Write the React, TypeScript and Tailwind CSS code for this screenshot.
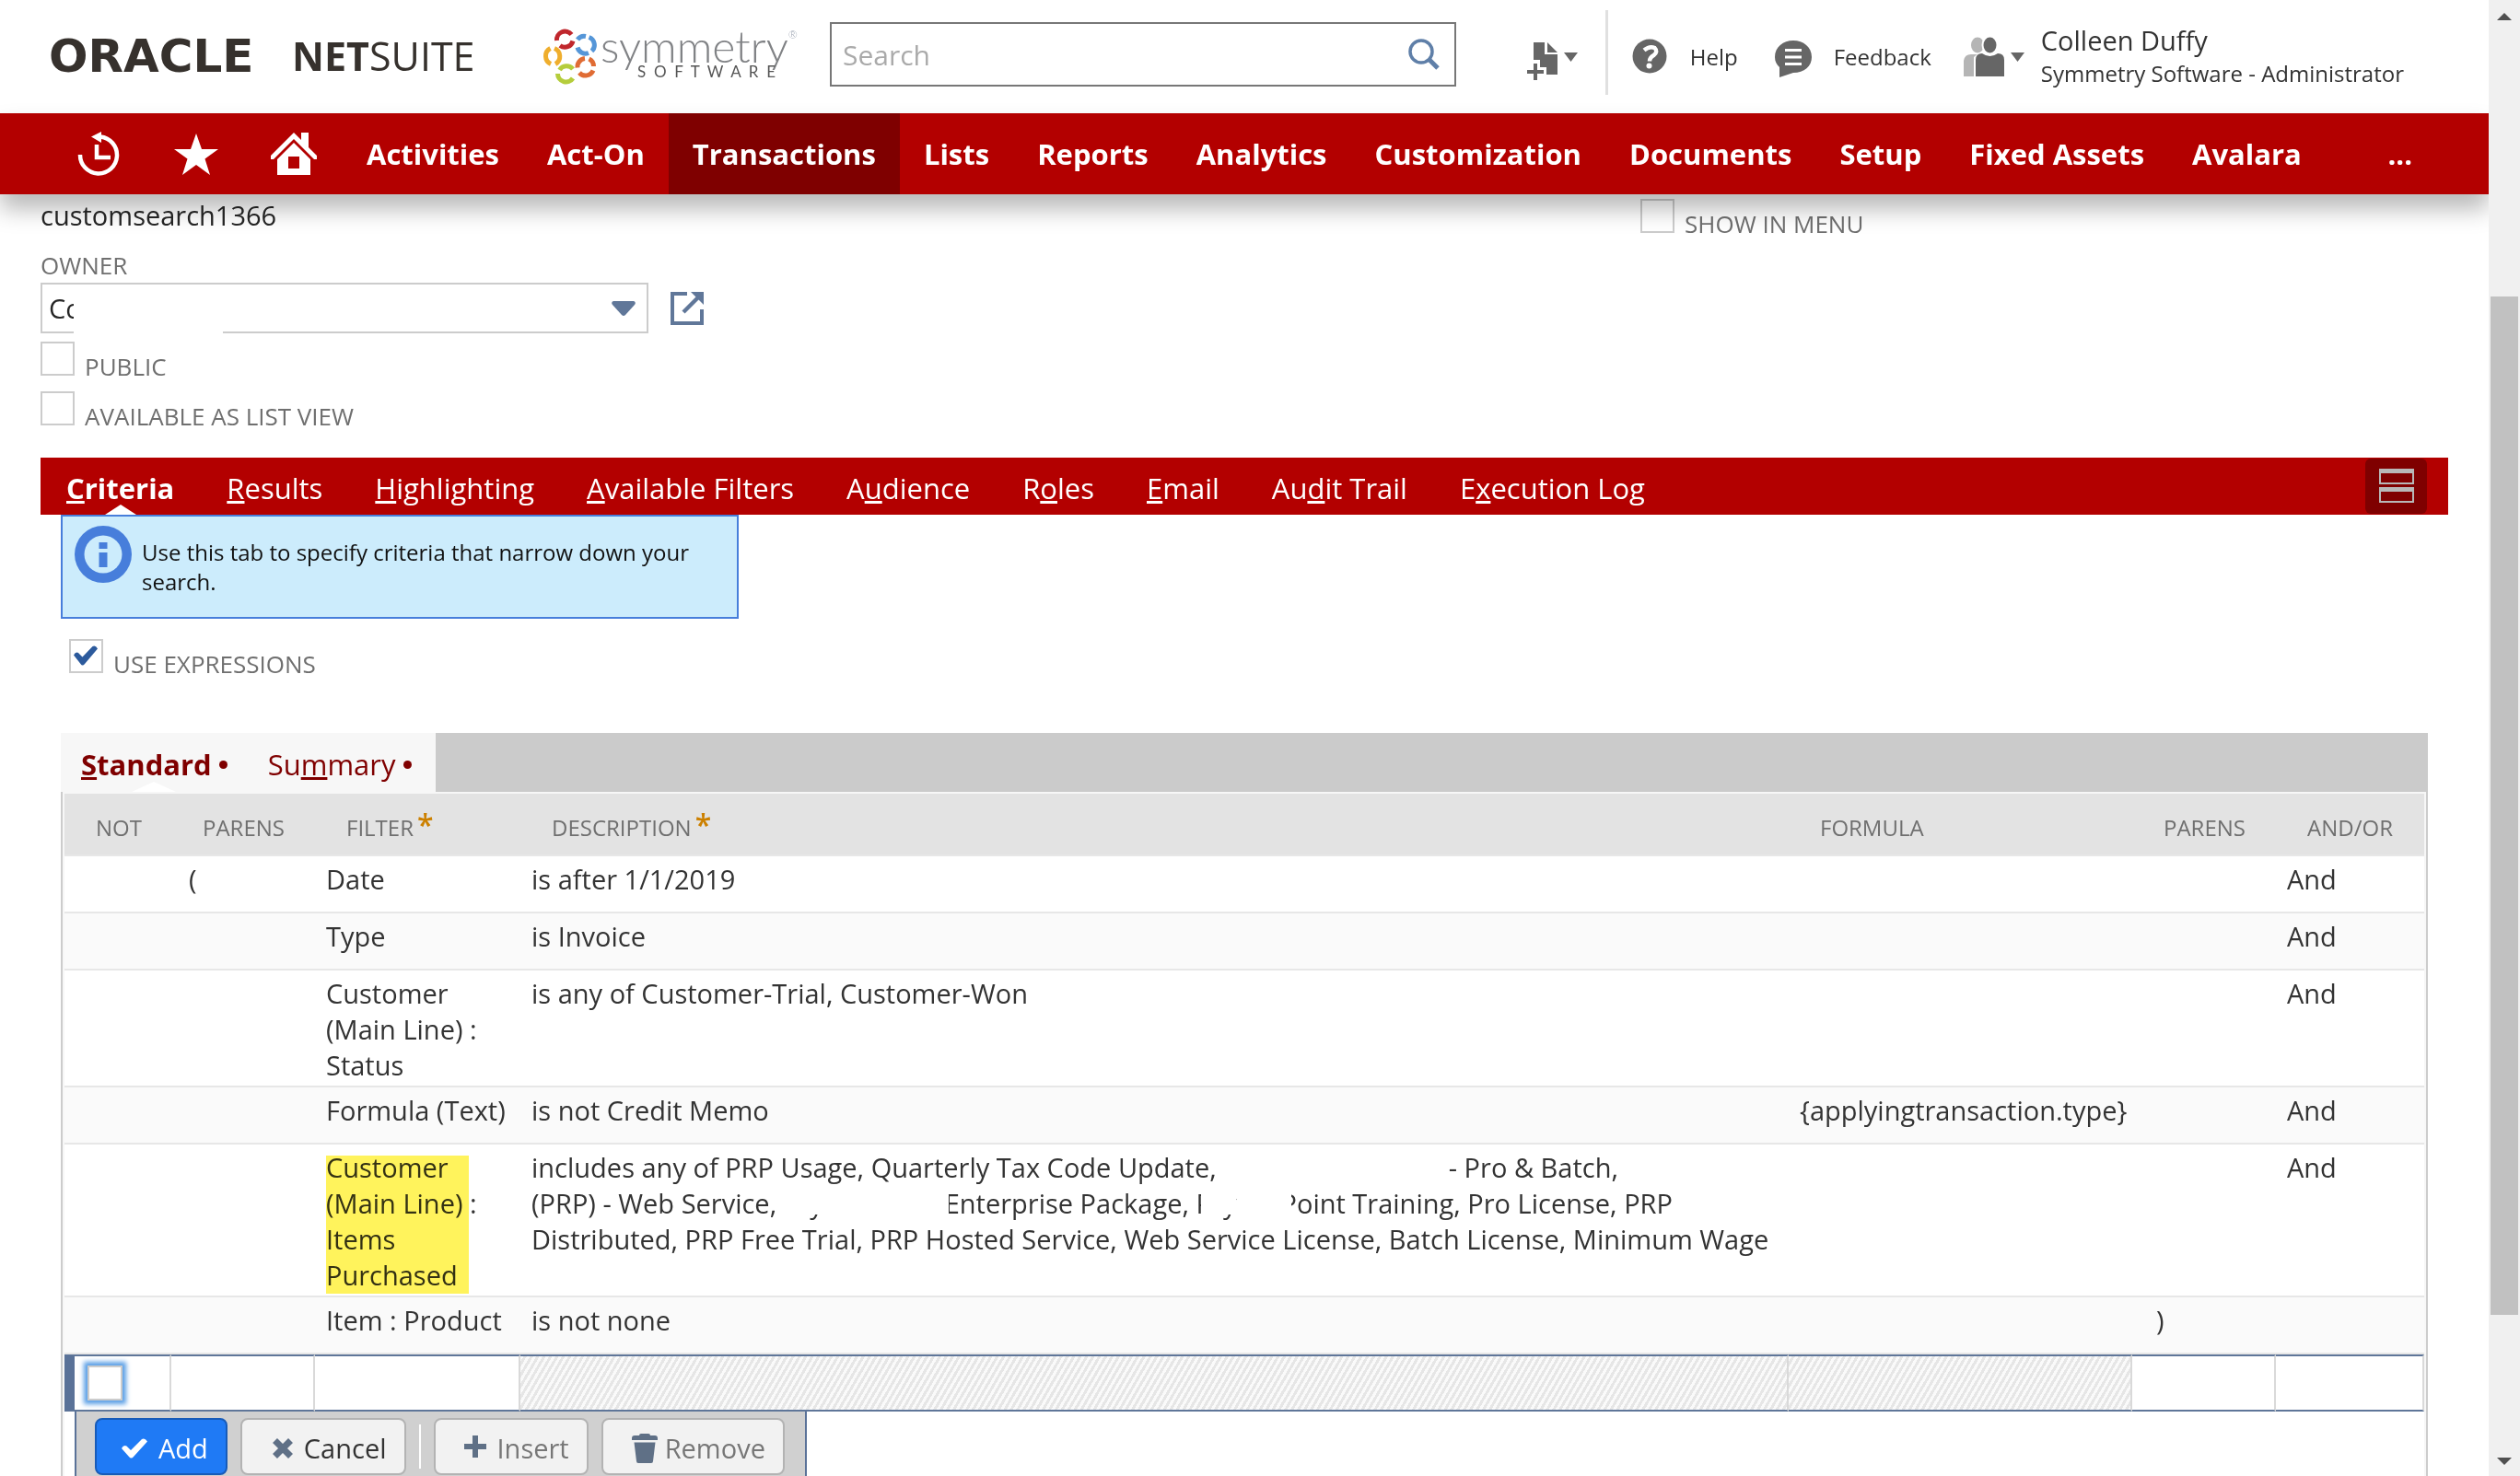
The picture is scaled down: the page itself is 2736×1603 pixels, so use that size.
import { useState } from "react";
import type { ReactNode } from "react";

const navLinks = [
  "Activities",
  "Act-On",
  "Transactions",
  "Lists",
  "Reports",
  "Analytics",
  "Customization",
  "Documents",
  "Setup",
  "Fixed Assets",
  "Avalara",
];

// [before, access key, after]
const tabs = [
  ["", "C", "riteria"],
  ["", "R", "esults"],
  ["", "H", "ighlighting"],
  ["", "A", "vailable Filters"],
  ["A", "u", "dience"],
  ["R", "o", "les"],
  ["", "E", "mail"],
  ["Au", "d", "it Trail"],
  ["E", "x", "ecution Log"],
];

type Criterion = {
  open?: string;
  filter: string;
  description: ReactNode;
  formula?: string;
  close?: string;
  join?: string;
  marked?: boolean;
};

const criteria: Criterion[] = [
  { open: "(", filter: "Date", description: "is after 1/1/2019", join: "And" },
  { filter: "Type", description: "is Invoice", join: "And" },
  {
    filter: "Customer (Main Line) : Status",
    description: "is any of Customer-Trial, Customer-Won",
    join: "And",
  },
  {
    filter: "Formula (Text)",
    description: "is not Credit Memo",
    formula: "{applyingtransaction.type}",
    join: "And",
  },
  {
    filter: "Customer (Main Line) : Items Purchased",
    description: <PurchasedItems />,
    join: "And",
    marked: true,
  },
  { filter: "Item : Product", description: "is not none", close: ")" },
];

function Masked({ children, mask }: { children: ReactNode; mask: string }) {
  return (
    <span className="relative inline-block">
      {children}
      <span className={`absolute bg-white ${mask}`} />
    </span>
  );
}

// Product names are blanked out in parts of the list
function PurchasedItems() {
  return (
    <div className="whitespace-nowrap">
      <div>
        includes any of PRP Usage, Quarterly Tax Code Update,
        <span className="inline-block w-[252px]" />- Pro &amp; Batch,
      </div>
      <div>
        (PRP) - Web Service,
        <span className="inline-block w-9" />
        <Masked mask="inset-x-0 top-0 h-8">y</Masked>
        <span className="inline-block w-[132px]" />
        <Masked mask="inset-y-0 left-0 w-1">E</Masked>
        nterprise Package, <Masked mask="inset-y-0 right-0 w-3">P</Masked>
        <span className="inline-block w-3" />
        <Masked mask="inset-x-0 top-0 h-8">y</Masked>
        <span className="inline-block w-12" />
        <Masked mask="inset-y-0 left-0 w-3">P</Masked>
        oint Training, Pro License, PRP
      </div>
      <div>
        Distributed, PRP Free Trial, PRP Hosted Service, Web Service License, Batch License, Minimum Wage
      </div>
    </div>
  );
}

function Caret() {
  return (
    <svg viewBox="0 0 15 10" className="h-[10px] w-[15px] fill-[#666]">
      <path d="M0 0h15L7.500 10z" />
    </svg>
  );
}

function CheckField({
  id,
  label,
  defaultChecked = false,
}: {
  id: string;
  label: string;
  defaultChecked?: boolean;
}) {
  const [checked, setChecked] = useState(defaultChecked);

  return (
    <div className="flex h-[43px] items-end gap-[11px]">
      <span className="relative flex self-start">
        <input
          id={id}
          type="checkbox"
          checked={checked}
          onChange={(e) => setChecked(e.target.checked)}
          className="size-[37px] appearance-none border-2 border-black/20"
        />
        {checked && (
          <svg
            viewBox="0 0 26 22"
            className="pointer-events-none absolute top-[7px] left-[5px] h-[22px] w-[26px] fill-[#2c5a9c]"
          >
            <path d="M0 10.500Q2 6.500 5 8L9.500 12.500 20.500 1Q23.500-1 26 3.500L12 20Q9.500 23 7.500 20z" />
          </svg>
        )}
      </span>
      <label htmlFor={id} className="text-[26px] leading-8 text-[#6f6f6f] uppercase">
        {label}
      </label>
    </div>
  );
}

function SymmetryLogo() {
  return (
    <div className="flex w-[262px] items-start" aria-label="symmetry software">
      <svg viewBox="0 0 60 62" className="h-[62px] w-[60px] shrink-0" fill="none" strokeWidth="5">
        <g stroke="#c0272d">
          <path d="M16.500 14a9 9 0 0 1 16-6.500M34 14.500a9 9 0 0 1-14 5" />
        </g>
        <g stroke="#5596d8">
          <path d="M39 13a9 9 0 0 1 9-3.500M51.500 10.500a9 9 0 0 1 3 15M51 27.500a9 9 0 0 1-12-6" />
        </g>
        <g stroke="#e06c34">
          <path d="M47 33.500a9 9 0 0 0-8 10M41 49a9 9 0 0 0 15-2.500M51.500 34a9 9 0 0 1 5 8" />
        </g>
        <g stroke="#b5cd3c">
          <path d="M34 45a9 9 0 0 0-14.500 1M17.500 50a9 9 0 0 0 16.500 5" />
        </g>
        <g stroke="#efae2d">
          <path d="M9.500 22.500a9.500 9.500 0 0 0 .5 17M14 22.500a9.500 9.500 0 0 1 1 17" />
        </g>
      </svg>
      <div className="flex flex-col font-['Lato']">
        <div className="flex items-start pl-1 text-5xl leading-10 font-light text-[#808285]">
          symmetry
          <span className="text-xs leading-4 text-gray-400">®</span>
        </div>
        <span className="pl-11 text-[17px] leading-4 whitespace-pre text-[#555]">S  O  F  T  W  A  R  E</span>
      </div>
    </div>
  );
}

function Header() {
  return (
    <header className="flex h-[123px] items-start bg-white pr-[92px] pl-[53px] text-[#333]">
      <div className="flex h-[123px] w-[535px] items-center text-[#36312d]">
        <span className="w-[264px] font-['DejaVu_Sans'] text-[50px] font-bold">ORACLE</span>
        <span className="text-[43px]">
          <b>NET</b>SUITE
        </span>
      </div>

      <div className="mt-[30px] mr-[51px]">
        <SymmetryLogo />
      </div>

      <form className="mt-6 flex h-[70px] min-w-0 flex-1 items-center border-2 border-[#777] pr-4 pl-3">
        <input
          type="search"
          aria-label="Search"
          placeholder="Search"
          className="min-w-0 flex-1 text-[30px] outline-none placeholder:text-[#aaa]"
        />
        <button type="button" aria-label="Run search">
          <svg viewBox="0 0 34 34" className="size-[34px]" fill="none" stroke="#5f7fa8">
            <circle cx="14" cy="14" r="12" strokeWidth="3.500" />
            <path d="M22.500 22.500 32 32" strokeWidth="5" />
          </svg>
        </button>
      </form>

      <button type="button" aria-label="Create new" className="mt-[45px] ml-[77px] flex items-start">
        <svg viewBox="0 0 34 42" className="h-[42px] w-[34px] fill-[#666]">
          {/* page, folded corner, plus sign */}
          <path d="M7 1h12v13h14v22H21v-8h-7v-8H7z" />
          <path d="M22 1l11 11H22zM7 24h4v7h7v4h-7v7H7v-7H0v-4h7z" />
        </svg>
        <span className="mt-3 ml-[6px] flex">
          <Caret />
        </span>
      </button>

      <div className="mt-[11px] ml-[30px] h-[92px] w-[3px] bg-[#e0e0e0]" />

      <a href="#help" className="mt-[42px] ml-[26px] flex items-start gap-[25px] text-2xl leading-10">
        <svg viewBox="0 0 38 38" className="size-[38px]">
          <circle cx="19" cy="19" r="18.500" fill="#666" />
          <path
            d="M13 12.500q6-5 11.500-2.500 4 4-1 8-4.500 2.500-4.500 6.500"
            fill="none"
            stroke="#fff"
            strokeWidth="4.500"
          />
          <circle cx="18.500" cy="29.500" r="3" fill="#fff" />
        </svg>
        Help
      </a>

      <a href="#feedback" className="mt-[42px] ml-10 flex items-start gap-[24px] text-2xl leading-10">
        <svg viewBox="0 0 40 40" className="mt-[2px] size-10">
          <path
            d="M20 0C31 0 40 7 40 18c0 10-8 17-20 17L5 40V29C2 26 0 23 0 18 0 7 9 0 20 0z"
            fill="#666"
          />
          <path d="M11 10.500h18M11 18h18M11 25.500h18" stroke="#fff" strokeWidth="3" />
        </svg>
        Feedback
      </a>

      <button type="button" aria-label="Change role" className="mt-10 ml-[35px] flex items-start">
        <svg viewBox="0 0 46 43" className="h-[43px] w-[46px]">
          <ellipse cx="15" cy="9" rx="7" ry="8.500" fill="#b5b5b5" />
          <path d="M0 43V26q1-7 8-7h10v24z" fill="#b5b5b5" />
          <ellipse cx="28.500" cy="9" rx="9" ry="10.500" fill="#fff" />
          <path d="M11 43V22l6-5h9v26z" fill="#fff" />
          <ellipse cx="28.500" cy="9" rx="7" ry="8.500" fill="#666" />
          <path d="M13 43V25q0-7 7-7 8.500 6 17 0 7 0 7 7v18z" fill="#666" />
        </svg>
        <span className="mt-[17px] ml-[5px] flex">
          <Caret />
        </span>
      </button>

      <div className="mt-6 ml-[18px] flex flex-col">
        <span className="text-[29px] leading-10">Colleen Duffy</span>
        <span className="text-2xl leading-8 whitespace-nowrap">Symmetry Software - Administrator</span>
      </div>
    </header>
  );
}

function NavBar() {
  return (
    <nav className="relative flex h-[88px] items-stretch bg-[#b30000] pl-[54px] text-[31px] font-bold text-white shadow-[0_16px_24px_rgba(0,0,0,0.28)]">
      <a href="#recent" aria-label="Recent records" className="flex w-[106px] items-center justify-center">
        <svg viewBox="0 0 46 48" className="h-12 w-[46px]" fill="none" stroke="#fff">
          <path d="M3 25A20 20 0 1 0 25 5.500" strokeWidth="4.500" />
          <path d="M21 14v14h15" strokeWidth="4.500" />
          <path d="M15 5.500 26 0v12z" fill="#fff" stroke="none" />
        </svg>
      </a>
      <a href="#shortcuts" aria-label="Shortcuts" className="flex w-[106px] items-center justify-center">
        <svg viewBox="0 0 48 45" className="h-[45px] w-12 fill-white">
          <path d="M24 0l6 17h18L33.500 27.500 39 45 24 34 9 45l5.500-17.500L0 17h18z" />
        </svg>
      </a>
      <a href="#home" aria-label="Home" className="flex w-[106px] items-center justify-center">
        <svg viewBox="0 0 50 46" className="h-[46px] w-[50px] fill-white">
          <path d="M25 0l8 8V0h8v16l9 9v4h-3L25 7 3 29H0v-4z" />
          <path d="M25 11l18 18v17H7V29zM19 26v13h12V26z" fillRule="evenodd" />
        </svg>
      </a>
      {navLinks.map((link) => (
        <a
          key={link}
          href={`#${link.toLowerCase()}`}
          className={`flex items-center px-[26px] whitespace-nowrap ${
            link === "Transactions" ? "bg-[#7f0000]" : ""
          }`}
        >
          {link}
        </a>
      ))}
      <a href="#more" className="ml-auto flex items-center pr-[83px]">
        ...
      </a>
    </nav>
  );
}

function TabBar() {
  return (
    <div className="flex h-[62px] items-stretch bg-[#b30000] pl-[28px] text-[31px] text-white">
      {tabs.map(([before, key, after], i) => (
        <button
          key={before + key + after}
          type="button"
          className={`relative mr-[57px] flex items-center pt-1 whitespace-pre ${
            i === 0 ? "font-bold" : ""
          }`}
        >
          <span>
            {before}
            <u>{key}</u>
            {after}
          </span>
          {i === 0 && (
            <svg
              viewBox="0 0 34 11"
              className="absolute bottom-0 left-1/2 h-[11px] w-[34px] -translate-x-1/2 fill-white"
            >
              <path d="M0 11L17 0l17 11z" />
            </svg>
          )}
        </button>
      ))}
      <button
        type="button"
        aria-label="Unlayered view"
        className="my-px mr-[23px] ml-auto flex w-[67px] items-center justify-center rounded-md bg-[#7f0000]"
      >
        <svg viewBox="0 0 38 38" className="size-[38px]" fill="none" stroke="#b8b8b8" strokeWidth="2">
          <path d="M1 1h36v15H1zM1 21h36v15H1z" />
          <path d="M1 3h36M1 23h36" strokeWidth="4" />
        </svg>
      </button>
    </div>
  );
}

function ColumnTitle({ children, required }: { children: string; required?: boolean }) {
  return (
    <th className="border-b-2 border-[#e7e7e7] bg-[#e3e3e3] pt-[21px] pb-[13px] pl-[34px] text-left align-top leading-8 font-normal whitespace-nowrap">
      {children}
      {required && <span className="ml-1 text-[32px] leading-0 font-semibold text-[#cc8000]">*</span>}
    </th>
  );
}

function CriteriaTable() {
  const cell = "border-b-2 border-[#e7e7e7] pt-[5px] pb-[3px] pl-3 align-top";
  const editCell = "border-y-2 border-r-2 border-y-[#5f7699] border-r-[#d9d9d9] bg-white";
  const hatched =
    "bg-[repeating-linear-gradient(120deg,#fafafa_0px,#fafafa_3px,#e6e6e6_3px,#e6e6e6_6px)]";

  return (
    <table className="w-full table-fixed border-separate border-spacing-0 text-[29px] leading-[39px] text-[#333]">
      <colgroup>
        <col className="w-[116px]" />
        <col className="w-[156px]" />
        <col className="w-[223px]" />
        <col />
        <col className="w-[373px]" />
        <col className="w-[156px]" />
        <col className="w-[161px]" />
      </colgroup>
      <thead className="text-2xl text-[#6f6f6f]">
        <tr>
          <ColumnTitle>NOT</ColumnTitle>
          <ColumnTitle>PARENS</ColumnTitle>
          <ColumnTitle required>FILTER</ColumnTitle>
          <ColumnTitle required>DESCRIPTION</ColumnTitle>
          <ColumnTitle>FORMULA</ColumnTitle>
          <ColumnTitle>PARENS</ColumnTitle>
          <ColumnTitle>AND/OR</ColumnTitle>
        </tr>
      </thead>
      <tbody>
        {criteria.map((row) => (
          <tr key={row.filter} className="h-[62px] even:bg-[#fafafa]">
            <td className={cell} />
            <td className={`${cell} pl-[19px]`}>{row.open}</td>
            <td className={`${cell} pr-2`}>
              <div className="relative">
                {row.filter}
                {row.marked && (
                  <span className="absolute top-[7px] -bottom-px left-0 w-[155px] bg-[#fff35c] mix-blend-multiply" />
                )}
              </div>
            </td>
            <td className={cell}>{row.description}</td>
            <td className={cell}>{row.formula}</td>
            <td className={`${cell} pl-[26px]`}>{row.close}</td>
            <td className={cell}>{row.join}</td>
          </tr>
        ))}
        <tr className="h-[62px]">
          <td className={`${editCell} border-l-[11px] border-l-[#5a7298] pl-[14px]`}>
            <input
              type="checkbox"
              aria-label="Not"
              className="block size-[38px] appearance-none border-2 border-[#ccc] bg-white shadow-[0_0_5px_4px_#5a9fe6]"
            />
          </td>
          <td className={editCell} />
          <td className={editCell} />
          <td className={`${editCell} ${hatched}`} />
          <td className={`${editCell} ${hatched}`} />
          <td className={editCell} />
          <td className={editCell} />
        </tr>
      </tbody>
    </table>
  );
}

function RowActions() {
  const button = "flex h-[62px] items-center rounded-lg border-2 pt-1 font-medium";
  const plain = "border-[#b3b3b3] bg-[#f2f2f2]";

  return (
    <div className="ml-[11px] flex h-[84px] w-fit items-start gap-[14px] border-x-2 border-[#5a7298] bg-[#d0d0d0] pt-[7px] pr-[22px] pl-5 text-[29px]">
      <button
        type="button"
        className={`${button} gap-3 border-[#175bb8] bg-[#1f7af5] pr-[19px] pl-[27px] text-white`}
      >
        <svg viewBox="0 0 28 22" className="h-[22px] w-7 fill-white">
          <path d="M0 11Q2 7 5.500 8.500L10 13 22 1Q25-1 28 3.500L13 20Q10.500 23 8 20z" />
        </svg>
        Add
      </button>
      <button type="button" className={`${button} ${plain} gap-3 pr-[19px] pl-[33px] text-[#333]`}>
        <svg viewBox="0 0 22 22" className="size-[22px]" stroke="#5f7086" strokeWidth="7">
          <path d="M2.500 2.500l17 17M19.500 2.500l-17 17" />
        </svg>
        Cancel
      </button>
      <div className="mt-[7px] h-12 w-[2px] bg-white" />
      <button type="button" className={`${button} ${plain} gap-3 pr-[19px] pl-[31px] text-[#777]`}>
        <svg viewBox="0 0 24 24" className="mb-1 size-6" stroke="#5f7086" strokeWidth="6">
          <path d="M12 0v24M0 12h24" />
        </svg>
        Insert
      </button>
      <button type="button" className={`${button} ${plain} gap-2 pr-[19px] pl-[31px] text-[#777]`}>
        <svg viewBox="0 0 28 32" className="h-8 w-7 fill-[#5f7086]">
          <path d="M8 2q0-2 2-2h8q2 0 2 2h5q3 0 3 3v2H0V5q0-3 3-3zM2.500 9.500h23L23 30q0 2-2 2H7q-2 0-2-2z" />
        </svg>
        Remove
      </button>
    </div>
  );
}

function ScrollBar() {
  return (
    <div className="flex w-[34px] shrink-0 flex-col items-center bg-[#f0f0f0]">
      <div className="flex h-[20.1%] items-start pt-[14px]">
        <svg viewBox="0 0 16 8" className="h-2 w-4 fill-[#505050]">
          <path d="M0 8L8 0l8 8z" />
        </svg>
      </div>
      <div className="h-[69%] w-[30px] bg-[#c1c1c1]" />
      <svg viewBox="0 0 16 8" className="mt-auto mb-3 h-2 w-4 fill-[#505050]">
        <path d="M0 0h16L8 8z" />
      </svg>
    </div>
  );
}

export default function App() {
  return (
    <div className="flex h-screen overflow-hidden bg-white font-['Open_Sans',sans-serif]">
      <div className="min-w-0 flex-1 overflow-hidden">
        <Header />
        <NavBar />

        <main className="pr-11 pl-11">
          <div className="flex">
            <div className="flex flex-1 flex-col pt-[3px]">
              <div className="text-[29px] leading-[39px] text-[#262626]">customsearch1366</div>
              <label htmlFor="owner" className="mt-[19px] text-[26px] leading-8 text-[#6f6f6f]">
                OWNER
              </label>
              <div className="mt-[3px] flex items-center gap-6">
                <div className="relative">
                  <select
                    id="owner"
                    className="block h-[55px] w-[660px] appearance-none border-2 border-[#ccc] px-[7px] text-[29px] text-[#262626]"
                  >
                    <option>Colleen Duffy</option>
                  </select>
                  <span className="absolute top-[2px] bottom-0 left-9 w-[162px] bg-white" />
                  <svg
                    viewBox="0 0 26 16"
                    className="pointer-events-none absolute top-5 right-[14px] h-4 w-[26px] fill-[#607799]"
                  >
                    <path d="M2 0h22q3 1 1 4L15 15q-2 2-4 0L1 4Q-1 1 2 0z" />
                  </svg>
                </div>
                <a href="#owner" aria-label="Open owner record">
                  <svg viewBox="0 0 36 36" className="size-9" fill="none" stroke="#607799">
                    <path d="M18 2H2v32h32V19" strokeWidth="4" />
                    <path d="M14 22 30 6" strokeWidth="4.500" />
                    <path d="M22 0h14v14z" fill="#607799" stroke="none" />
                  </svg>
                </a>
              </div>
              <div className="mt-[9px] flex flex-col gap-[11px]">
                <CheckField id="public" label="Public" />
                <CheckField id="list-view" label="Available as list view" />
              </div>
            </div>
            <div className="w-[877px] pt-[5px]">
              <CheckField id="show-in-menu" label="Show in menu" />
            </div>
          </div>

          <div className="mt-[29px]">
            <TabBar />
          </div>

          <div className="px-[22px]">
            <div className="mb-[22px] flex h-[113px] w-[736px] items-start gap-[11px] border-2 border-[#477edb] bg-[#ccecfc] pt-[10px] pl-[13px]">
              <svg viewBox="0 0 62 62" className="size-[62px] shrink-0">
                <circle cx="31" cy="31" r="31" fill="#477edb" />
                <circle cx="31" cy="31" r="20.500" fill="#ccecfc" />
                <path d="M26.500 18h9v7h-9zM26.500 29h9v16h-9z" fill="#477edb" />
              </svg>
              <p className="w-[620px] pt-[13px] text-2xl leading-8 text-[#111]">
                Use this tab to specify criteria that narrow down your search.
              </p>
            </div>

            <div className="pl-[9px]">
              <CheckField id="expressions" label="Use expressions" defaultChecked />
            </div>

            <div className="mt-[59px] flex h-16 bg-[#cbcbcb] text-[31px] text-[#7f0000]">
              <div className="flex w-[407px] items-stretch gap-11 bg-[#f7f7f7] pl-[22px]">
                <button type="button" className="relative flex items-center gap-2 pt-1 font-bold">
                  <span>
                    <u>S</u>tandard
                  </span>
                  <span className="size-[9px] rounded-full bg-[#7f0000]" />
                  <svg
                    viewBox="0 0 48 11"
                    className="absolute bottom-0 left-1/2 h-[11px] w-12 -translate-x-1/2 fill-white"
                  >
                    <path d="M0 11L24 0l24 11z" />
                  </svg>
                </button>
                <button type="button" className="flex items-center gap-2 pt-1">
                  <span>
                    Su<u>m</u>mary
                  </span>
                  <span className="size-[9px] rounded-full bg-[#7f0000]" />
                </button>
              </div>
            </div>

            <div className="border-x-2 border-[#ccc]">
              <div className="border-x-2 border-t-2 border-[#f7f7f7]">
                <CriteriaTable />
                <RowActions />
              </div>
            </div>
          </div>
        </main>
      </div>
      <ScrollBar />
    </div>
  );
}
